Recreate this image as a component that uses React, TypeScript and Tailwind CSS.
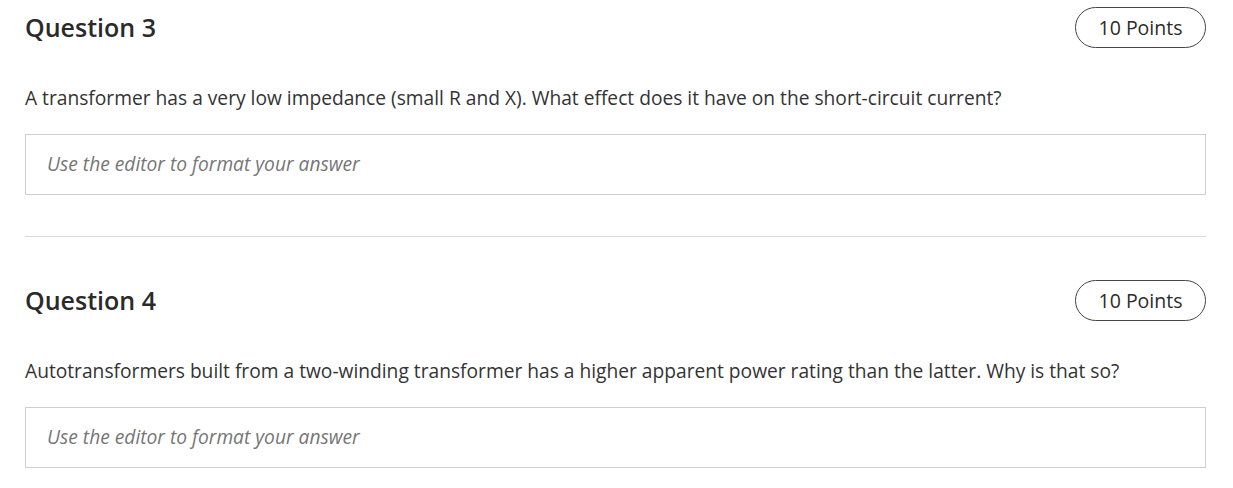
const QUESTIONS = [
  {
    title: "Question 3",
    points: "10 Points",
    text: "A transformer has a very low impedance (small R and X). What effect does it have on the short-circuit current?",
  },
  {
    title: "Question 4",
    points: "10 Points",
    text: "Autotransformers built from a two-winding transformer has a higher apparent power rating than the latter. Why is that so?",
  },
];

function QuestionBlock({ q }: { q: (typeof QUESTIONS)[number] }) {
  return (
    <div>
      <div className="flex items-center justify-between h-[41px]">
        <h2 className="text-[25px] font-semibold text-[#2a2a2a] leading-none">{q.title}</h2>
        <div className="flex items-center justify-center w-[131px] h-[41px] rounded-full border border-[#444] text-[19.5px] text-[#2b2b2b]">
          {q.points}
        </div>
      </div>
      <p className="mt-[36px] text-[19.2px] leading-[27px] text-[#333]">{q.text}</p>
      <div className="mt-[23px] h-[61px] border border-[#cfcfcf] flex items-center pl-[21px]">
        <span className="italic text-[19.2px] text-[#767676]">Use the editor to format your answer</span>
      </div>
    </div>
  );
}

export default function App() {
  return (
    <div
      className="bg-white w-[1233px] h-[488px] pl-[25px] pr-[27px] pt-[7px]"
      style={{ fontFamily: '"Open Sans", sans-serif' }}
    >
      <QuestionBlock q={QUESTIONS[0]} />
      <div className="mt-[41px] mb-[43px] border-t border-[#d9d9d9]" />
      <QuestionBlock q={QUESTIONS[1]} />
    </div>
  );
}
